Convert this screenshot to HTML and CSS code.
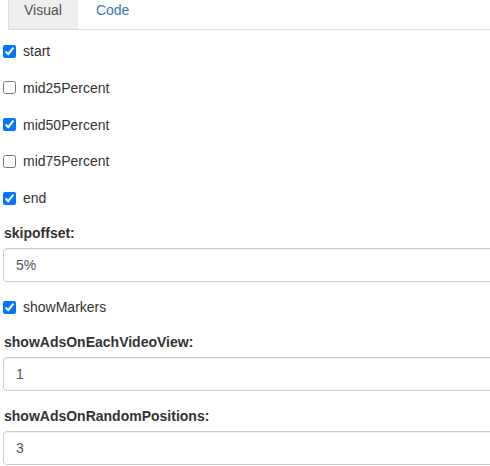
FILE: index.html
```html
<!DOCTYPE html>
<html>
<head>
<meta charset="utf-8">
<link rel="stylesheet" href="styles.css">
</head>
<body>
<div class="page">
  <ul class="tabs">
    <li class="tab tab-active">Visual</li>
    <li class="tab tab-link">Code</li>
  </ul>
  <div class="form">
    <div class="checks">
      <label class="check"><input type="checkbox" checked><span>start</span></label>
      <label class="check"><input type="checkbox"><span>mid25Percent</span></label>
      <label class="check"><input type="checkbox" checked><span>mid50Percent</span></label>
      <label class="check"><input type="checkbox"><span>mid75Percent</span></label>
      <label class="check"><input type="checkbox" checked><span>end</span></label>
    </div>
    <div class="field">
      <div class="field-label">skipoffset:</div>
      <div class="input">5%</div>
    </div>
    <label class="check"><input type="checkbox" checked><span>showMarkers</span></label>
    <div class="field">
      <div class="field-label">showAdsOnEachVideoView:</div>
      <div class="input">1</div>
    </div>
    <div class="field">
      <div class="field-label">showAdsOnRandomPositions:</div>
      <div class="input">3</div>
    </div>
  </div>
</div>
</body>
</html>
```
FILE: styles.css
```css
html, body {
  margin: 0;
  padding: 0;
  background: #fff;
  overflow: hidden;
}
body {
  font-family: "Liberation Sans", Arial, sans-serif;
  font-size: 14px;
  color: #333;
}
.page {
  width: 490px;
  height: 466px;
  overflow: hidden;
}
.tabs {
  list-style: none;
  margin: 0 0 0 8px;
  padding: 0;
  display: flex;
  gap: 2px;
  border-bottom: 1px solid #ddd;
}
.tab {
  padding: 0 15px 9px;
  line-height: 20px;
  border: 1px solid transparent;
  border-top: none;
  border-bottom: none;
}
.tab-active {
  background: #eee;
  border-left-color: #ddd;
  border-right-color: #eee;
  color: #555;
}
.tab-link {
  color: #337ab7;
}
.form {
  padding: 11px 0 0 0;
  display: flex;
  flex-direction: column;
  gap: 15px;
}
.checks {
  display: flex;
  flex-direction: column;
  gap: 16.75px;
}
.check {
  display: flex;
  align-items: center;
  height: 20px;
  line-height: 20px;
}
.check input {
  margin: 0 7px 0 3px;
  width: 13px;
  height: 13px;
}
.field {
  display: flex;
  flex-direction: column;
  gap: 5px;
}
.field-label {
  font-weight: bold;
  line-height: 20px;
  padding-left: 4px;
}
.input {
  margin-left: 3px;
  width: 520px;
  height: 34px;
  box-sizing: border-box;
  border: 1px solid #ccc;
  border-radius: 4px;
  padding: 6px 12px;
  line-height: 20px;
  color: #555;
  box-shadow: inset 0 1px 1px rgba(0,0,0,0.075);
}
```
